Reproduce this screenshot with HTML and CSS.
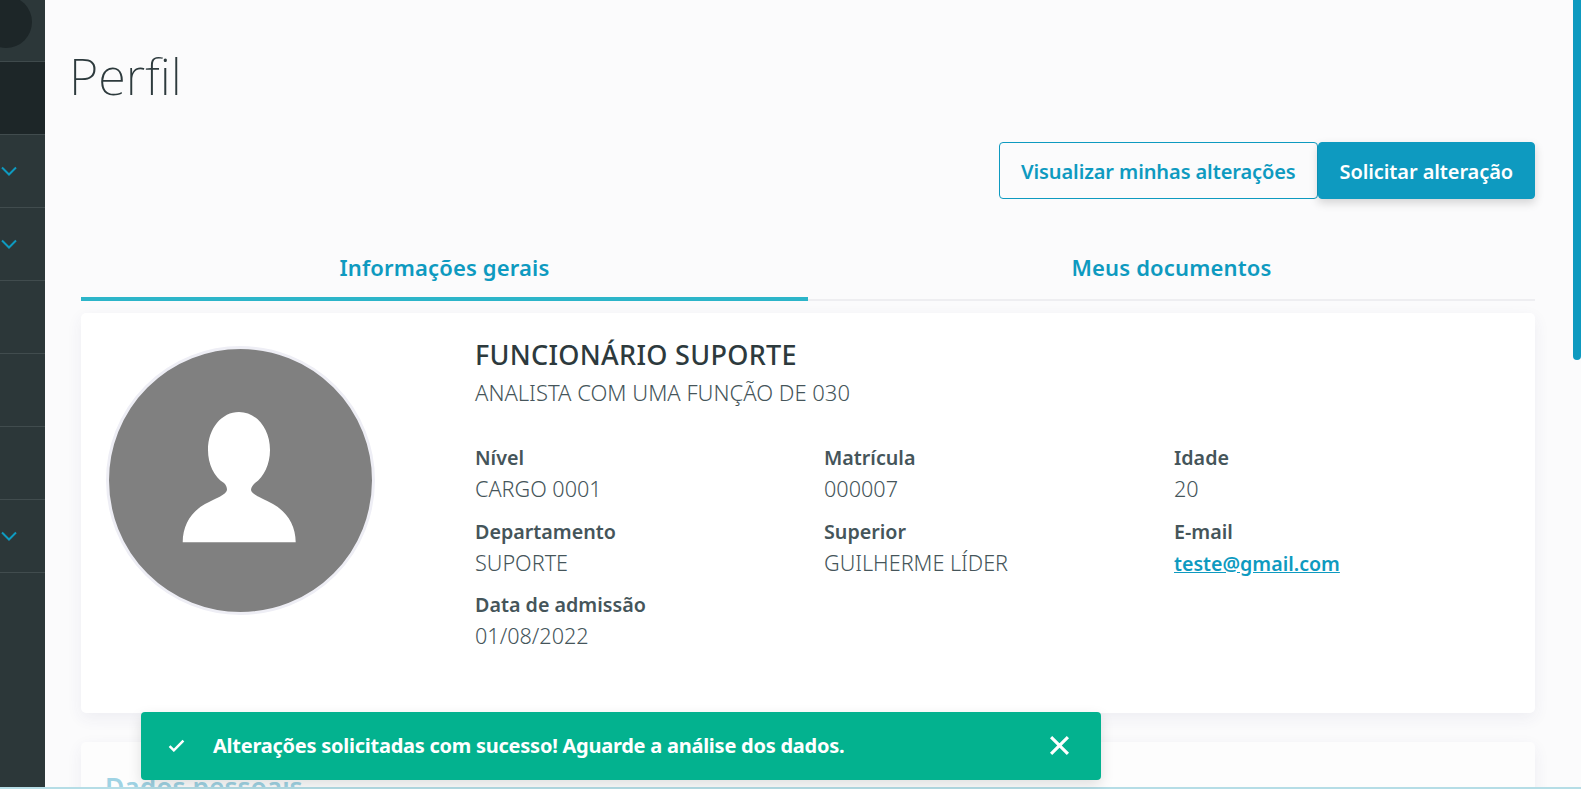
FILE: index.html
```html
<!DOCTYPE html>
<html lang="pt-BR">
<head>
<meta charset="utf-8">
<title>Perfil</title>
<link rel="stylesheet" href="styles.css">
</head>
<body>
<div class="app">
  <aside class="sidebar">
    <div class="side-top"><div class="side-avatar"></div></div>
    <div class="side-active"></div>
    <div class="side-row"><svg class="chev" viewBox="0 0 16 10"><path d="M1 1.5l7 7 7-7"/></svg></div>
    <div class="side-row"><svg class="chev" viewBox="0 0 16 10"><path d="M1 1.5l7 7 7-7"/></svg></div>
    <div class="side-row"></div>
    <div class="side-row"></div>
    <div class="side-row"></div>
    <div class="side-row"><svg class="chev" viewBox="0 0 16 10"><path d="M1 1.5l7 7 7-7"/></svg></div>
  </aside>
  <main class="main">
    <h1 class="title">Perfil</h1>
    <div class="actions">
      <button class="btn btn-outline">Visualizar minhas alterações</button>
      <button class="btn btn-solid">Solicitar alteração</button>
    </div>
    <div class="tabs">
      <div class="tab tab-active">Informações gerais</div>
      <div class="tab">Meus documentos</div>
    </div>
    <section class="card profile">
      <div class="avatar">
        <svg class="avatar-img" viewBox="19 19 263 263"><path d="M92.7 212.3H205.7C205.7 195 197 182 183 174C172 168 162 165 161 160C161 157 163 155 165 153C174 147 180 134 180 120C180 98 166 82 149 82C132 82 118 98 118 120C118 134 124 147 134 153C136 155 137 157 137 160C136 165 126 168 115 174C101 182 92.7 195 92.7 212.3Z"/></svg>
      </div>
      <div class="info">
        <h2 class="name">FUNCIONÁRIO SUPORTE</h2>
        <p class="role">ANALISTA COM UMA FUNÇÃO DE 030</p>
        <dl class="fields">
          <div class="field"><dt>Nível</dt><dd>CARGO 0001</dd></div>
          <div class="field"><dt>Matrícula</dt><dd>000007</dd></div>
          <div class="field"><dt>Idade</dt><dd>20</dd></div>
          <div class="field"><dt>Departamento</dt><dd>SUPORTE</dd></div>
          <div class="field"><dt>Superior</dt><dd>GUILHERME LÍDER</dd></div>
          <div class="field"><dt>E-mail</dt><dd><a class="mail" href="#">teste@gmail.com</a></dd></div>
          <div class="field"><dt>Data de admissão</dt><dd>01/08/2022</dd></div>
        </dl>
      </div>
    </section>
    <section class="card second">
      <h3 class="second-title">Dados pessoais</h3>
    </section>
  </main>
</div>
<div class="scrollbar"></div>
<div class="bottom-line"></div>
<div class="toast">
  <svg class="toast-check" viewBox="0 0 16 12"><path d="M1.5 6.5l4 4 9-9"/></svg>
  <span class="toast-text">Alterações solicitadas com sucesso! Aguarde a análise dos dados.</span>
  <svg class="toast-close" viewBox="0 0 20 20"><path d="M2 2l16 16M18 2L2 18"/></svg>
</div>
</body>
</html>
```
FILE: styles.css
```css
* { box-sizing: border-box; }
html, body { margin: 0; height: 789px; overflow: hidden; }
body { background: #fbfbfc; font-family: "Noto Sans", sans-serif; color: #45555a; }
.app { display: flex; height: 789px; overflow: hidden; }

.sidebar { width: 45px; flex: none; background: #2c3739; overflow: hidden; }
.side-top { height: 62px; border-bottom: 1px solid #3f4a4c; overflow: hidden; }
.side-avatar { width: 52px; height: 52px; border-radius: 50%; background: #1d2628; margin: -4px 0 0 -20px; }
.side-active { height: 72px; background: #1d2628; }
.side-row { height: 73px; border-top: 1px solid #414c4e; display: flex; align-items: center; }
.side-row:last-child { border-bottom: 1px solid #414c4e; height: 74px; }
.chev { width: 16px; height: 10px; margin-left: 1px; fill: none; stroke: #0e9ac0; stroke-width: 2; }

.main { flex: 1; padding: 0 46px 0 36px; min-width: 0; }
.title { margin: 0 0 0 -12px; height: 142px; padding-top: 43px; font-size: 50.5px; line-height: 66px; font-weight: 200; color: #2d3a3d; }
.actions { display: flex; justify-content: flex-end; }
.btn { height: 57px; padding: 1px 21px 0; font-family: inherit; font-size: 20px; font-weight: 600; letter-spacing: -.1px; border-radius: 4px; border: 1px solid #0e9ac0; }
.btn-outline { background: #fbfbfc; color: #0e9ac0; }
.btn-solid { background: #0e9ac0; color: #fff; box-shadow: 0 4px 10px rgba(0, 0, 0, .16); }

.tabs { display: flex; margin-top: 38px; border-bottom: 2px solid #eeeef1; height: 64px; }
.tab { flex: 1; height: 64px; display: flex; align-items: center; justify-content: center; font-size: 22px; font-weight: 600; letter-spacing: .15px; color: #0e9ac0; border-bottom: 4px solid transparent; }
.tab-active { border-bottom-color: #2cb5c9; }

.card { background: #fff; border-radius: 5px; box-shadow: 0 5px 16px rgba(60, 60, 120, .07); }
.profile { margin-top: 12px; height: 400px; padding: 25px 25px 0; display: flex; }
.avatar { width: 269px; height: 269px; margin-top: 8px; flex: none; border-radius: 50%; background: #808080; border: 3px solid #eeeef5; overflow: hidden; }
.avatar-img { display: block; width: 263px; height: 263px; fill: #fff; }
.info { margin-left: 100px; flex: 1; }
.name { margin: -1px 0 0; font-size: 27px; line-height: 36px; font-weight: 550; letter-spacing: .3px; color: #2d3a3d; }
.role { margin: 1px 0 33px; font-size: 22px; line-height: 36px; font-weight: 300; color: #45555a; }
.fields { margin: 0; display: grid; grid-template-columns: 349px 350px 349px; }
.field { height: 73.6px; }
dt { font-size: 19.7px; line-height: 30px; font-weight: 600; color: #45555a; }
dd { margin: 0; font-size: 21.6px; line-height: 31px; font-weight: 300; color: #45555a; }
.mail { color: #0e9ac0; font-weight: 600; font-size: 19.6px; }

.second { margin-top: 29px; height: 120px; padding: 25px 24px; background: #fdfdfd; }
.second-title { margin: 0; font-size: 26.4px; line-height: 40px; font-weight: 600; color: #9fd3e4; }

.scrollbar { position: absolute; top: 0; right: 0; width: 8px; height: 360px; background: #0e9ac0; border-radius: 0 0 5px 5px; }
.bottom-line { position: absolute; left: 0; right: 0; bottom: 0; height: 2px; background: #b5dde6; }
.toast { position: absolute; left: 141px; top: 712px; width: 960px; height: 68px; padding: 0 31px 2px 27px; display: flex; align-items: center; background: #03b28f; border-radius: 4px; color: #fff; box-shadow: 0 5px 14px rgba(0, 0, 0, .12); }
.toast-check { width: 17px; height: 13px; fill: none; stroke: #fff; stroke-width: 2.4; }
.toast-text { margin-left: 28px; flex: 1; font-size: 20px; font-weight: 700; letter-spacing: -.25px; }
.toast-close { width: 21px; height: 21px; fill: none; stroke: #fff; stroke-width: 3; }
```
